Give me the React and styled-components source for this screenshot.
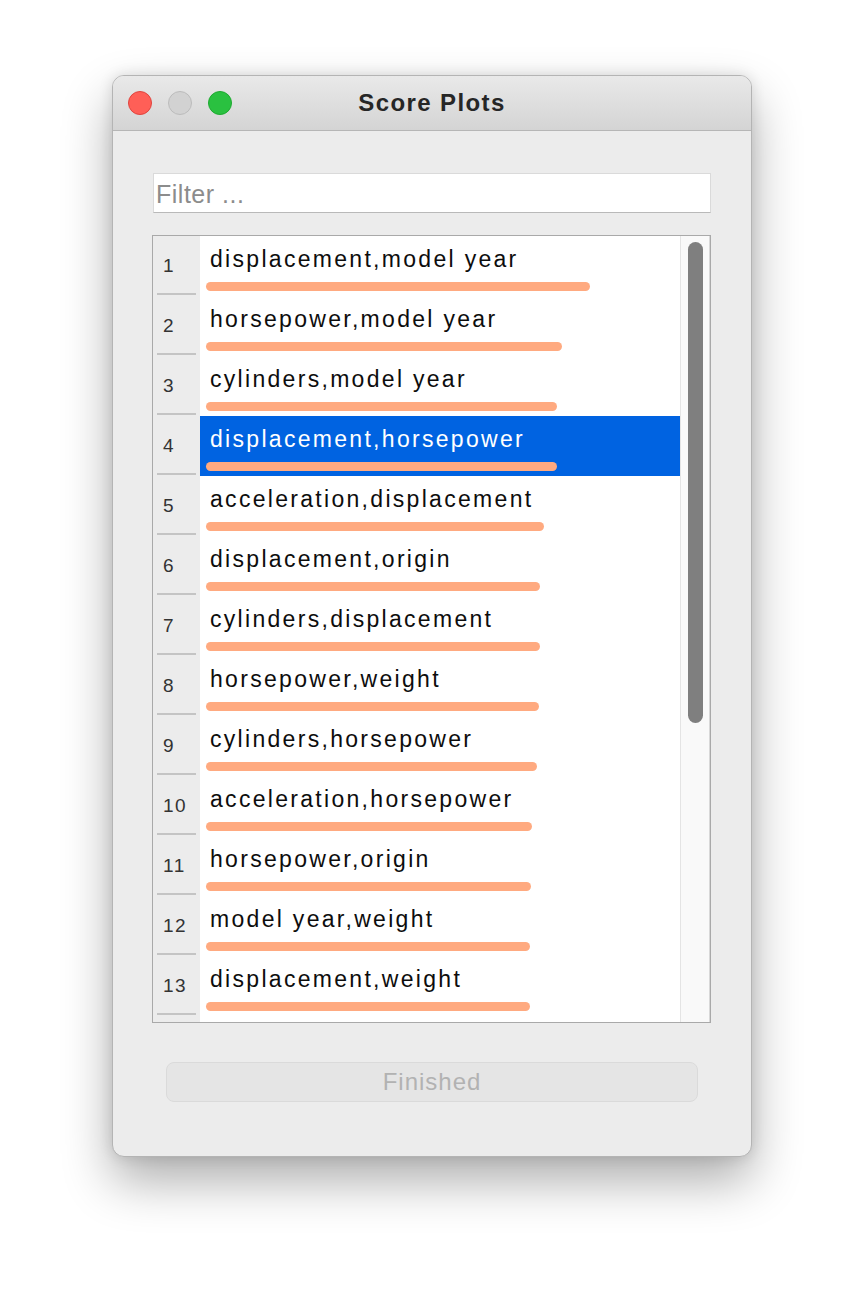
import React from "react";
import styled, { createGlobalStyle } from "styled-components";

const GlobalStyle = createGlobalStyle`
  html, body {
    margin: 0;
    padding: 0;
    background: #ffffff;
    font-family: "Liberation Sans", Arial, sans-serif;
  }
`;

const Page = styled.div`
  padding: 75px 0 120px 112px;
`;

const Window = styled.div`
  width: 640px;
  box-sizing: border-box;
  border: 1px solid #b4b4b4;
  border-radius: 12px;
  background: #ececec;
  overflow: hidden;
  box-shadow: 0 24px 50px rgba(0, 0, 0, 0.32), 0 0 14px rgba(0, 0, 0, 0.12);
`;

const TitleBar = styled.div`
  height: 54px;
  display: grid;
  grid-template-columns: 1fr auto 1fr;
  align-items: center;
  background: linear-gradient(#e9e9e9, #d4d4d4);
  border-bottom: 1px solid #b6b6b6;
`;

const Lights = styled.div`
  display: flex;
  gap: 16px;
  padding-left: 15px;
`;

const Light = styled.span`
  width: 24px;
  height: 24px;
  box-sizing: border-box;
  border-radius: 50%;
  background: ${(p) => p.$fill};
  border: 1px solid ${(p) => p.$edge};
`;

const Title = styled.div`
  font-size: 24px;
  font-weight: bold;
  letter-spacing: 1.4px;
  color: #262626;
`;

const Body = styled.div`
  padding: 42px 40px 54px 39px;
  display: flex;
  flex-direction: column;
`;

const Filter = styled.input`
  margin: 0 0 0 1px;
  height: 40px;
  box-sizing: border-box;
  border: 1px solid #dadada;
  border-bottom-color: #b9b9b9;
  background: #fff;
  padding: 3px 0 0 2px;
  font-family: "Liberation Sans", Arial, sans-serif;
  font-size: 25px;
  letter-spacing: 0.5px;
  color: #222;
  outline: none;
  &::placeholder {
    color: #8c8c8c;
  }
`;

const List = styled.div`
  margin-top: 22px;
  height: 788px;
  box-sizing: border-box;
  border: 1px solid #a9a9a9;
  display: flex;
  background: #fff;
`;

const Rows = styled.div`
  flex: 1;
  overflow: hidden;
`;

const Row = styled.div`
  height: 60px;
  display: flex;
`;

const NumberCell = styled.div`
  width: 47px;
  background: #ececec;
  padding: 0 4px 1px 4px;
  box-sizing: border-box;
  display: flex;
`;

const NumberBox = styled.div`
  flex: 1;
  display: flex;
  align-items: center;
  padding: 1px 0 0 6px;
  border-bottom: 2px solid #c4c4c4;
  font-size: 19px;
  line-height: 19px;
  letter-spacing: 1.5px;
  color: #333;
`;

const ItemCell = styled.div`
  flex: 1;
  display: flex;
  flex-direction: column;
  background: ${(p) => (p.$selected ? "#0063e1" : "#ffffff")};
  color: ${(p) => (p.$selected ? "#ffffff" : "#0d0d0d")};
`;

const ItemLabel = styled.div`
  padding: 12px 0 0 10px;
  font-size: 23px;
  line-height: 23px;
  letter-spacing: 2.3px;
  white-space: nowrap;
`;

const ScoreBar = styled.div`
  margin: 11px 0 0 6px;
  height: 9px;
  border-radius: 5px;
  background: #ffaa80;
`;

const ScrollTrack = styled.div`
  width: 30px;
  box-sizing: border-box;
  background: #f9f9f9;
  border-left: 1px solid #e4e4e4;
  border-right: 1px solid #d8d8d8;
  padding: 6px 6px 0 7px;
`;

const ScrollThumb = styled.div`
  height: ${(p) => p.$size}px;
  border-radius: 8px;
  background: #7f7f7f;
`;

const FinishButton = styled.button`
  margin: 39px 13px 0 14px;
  height: 40px;
  box-sizing: border-box;
  border: 1px solid #dadada;
  border-radius: 8px;
  background: #e5e5e5;
  font-family: "Liberation Sans", Arial, sans-serif;
  font-size: 24px;
  letter-spacing: 1px;
  color: #b2b2b2;
`;

// only the rows that fit in the visible part of the list
const plots = [
  ["displacement,model year", 384],
  ["horsepower,model year", 356],
  ["cylinders,model year", 351],
  ["displacement,horsepower", 351],
  ["acceleration,displacement", 338],
  ["displacement,origin", 334],
  ["cylinders,displacement", 334],
  ["horsepower,weight", 333],
  ["cylinders,horsepower", 331],
  ["acceleration,horsepower", 326],
  ["horsepower,origin", 325],
  ["model year,weight", 324],
  ["displacement,weight", 324],
];

export default function App() {
  const selected = 3;

  return (
    <Page>
      <GlobalStyle />
      <Window>
        <TitleBar>
          <Lights>
            <Light $fill="#ff5f57" $edge="#e0443e" />
            <Light $fill="#d2d2d2" $edge="#bcbcbc" />
            <Light $fill="#2ac140" $edge="#1eaa30" />
          </Lights>
          <Title>Score Plots</Title>
          <div />
        </TitleBar>
        <Body>
          <Filter placeholder="Filter ..." />
          <List>
            <Rows>
              {plots.map(([name, width], i) => (
                <Row key={name}>
                  <NumberCell>
                    <NumberBox>{i + 1}</NumberBox>
                  </NumberCell>
                  <ItemCell $selected={i === selected}>
                    <ItemLabel>{name}</ItemLabel>
                    <ScoreBar style={{ width: width + "px" }} />
                  </ItemCell>
                </Row>
              ))}
              <Row>
                <NumberCell />
                <ItemCell />
              </Row>
            </Rows>
            <ScrollTrack>
              <ScrollThumb $size={481} />
            </ScrollTrack>
          </List>
          <FinishButton disabled>Finished</FinishButton>
        </Body>
      </Window>
    </Page>
  );
}
